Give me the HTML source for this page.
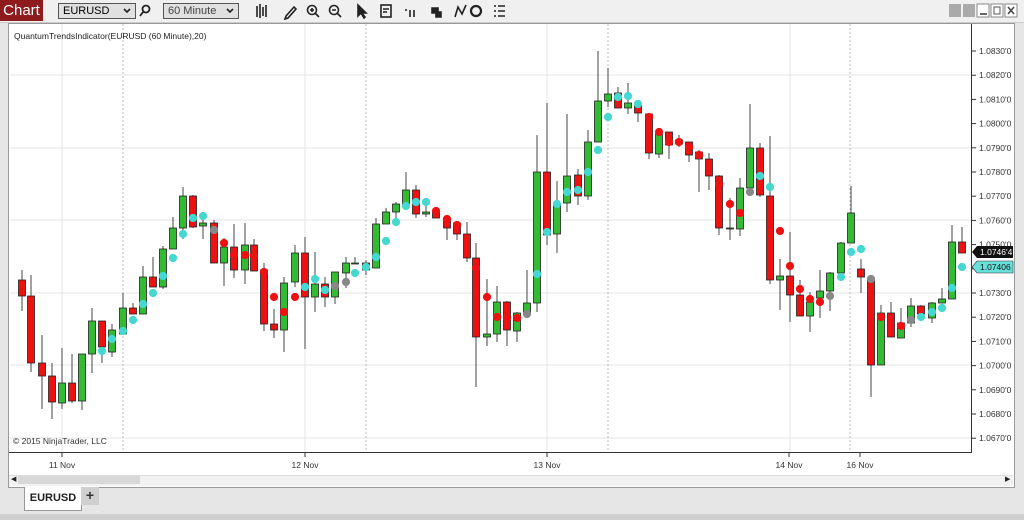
<!DOCTYPE html>
<html><head><meta charset="utf-8"><style>
body{margin:0;width:1024px;height:520px;overflow:hidden;background:#e6e6e6;font-family:"Liberation Sans",sans-serif;position:relative}
.abs{position:absolute}
.sel{position:absolute;top:3px;border:1px solid #555;background:#e0e0e0;font-size:11px;line-height:14px;padding-left:4px;box-sizing:border-box;height:16px}
.sel svg{position:absolute;right:4px;top:4px}
</style></head><body>
<div class="abs" style="left:0;top:0;width:1024px;height:22px;background:#f0f0f0;border-bottom:1px solid #ccc"></div>
<div class="abs" style="left:0;top:0;width:43px;height:21px;background:#8e1c1f;color:#fff;font-size:15px;line-height:21px;text-align:center">Chart</div>
<div class="sel" style="left:58px;width:78px">EURUSD<svg width="8" height="6"><path d="M1 1l3 3 3-3" stroke="#222" stroke-width="1.6" fill="none"/></svg></div>
<div class="sel" style="left:163px;width:76px;color:#444">60 Minute<svg width="8" height="6"><path d="M1 1l3 3 3-3" stroke="#222" stroke-width="1.6" fill="none"/></svg></div>
<svg class="abs" style="left:138px;top:3px" width="14" height="16" stroke="#222" fill="none" stroke-width="1.8"><circle cx="8" cy="6" r="3.5"/><path d="M5.5 8.5L2 13"/></svg>
<svg class="abs" style="left:250px;top:2px" width="270" height="18" stroke="#222" fill="none" stroke-width="1.6">
<path d="M7 4v11M10 2v14M13 5v9M16 3v12"/>
<path d="M36 14l8-9 2 2-8 9-3 1z"/>
<circle cx="62" cy="8" r="4.5"/><path d="M65 11l4 4M60 8h4M62 6v4"/>
<circle cx="84" cy="8" r="4.5"/><path d="M87 11l4 4M82 8h4"/>
<path d="M108 3v11l3-3 3 5 1-1-3-4h4z" fill="#222"/>
<rect x="131" y="3" width="10" height="12"/><path d="M133 7h6M133 10h4"/>
<path d="M182 6h6v5h-6zM186 10h5v5h-5z" fill="#222"/>
<path d="M205 15l3-10 4 7 4-9" /><circle cx="226" cy="9" r="5" stroke-width="2.2"/>
<path d="M244 4h2M248 4h7M244 9h2M248 9h7M244 14h2M248 14h7"/>
<path d="M156 7v2M160 8v7M164 8v7"/>
</svg>
<svg class="abs" style="left:948px;top:3px" width="70" height="16">
<rect x="1" y="1" width="12" height="13" fill="#aaa"/><rect x="15" y="1" width="12" height="13" fill="#aaa"/>
<rect x="29" y="1" width="12" height="13" fill="#fff" stroke="#888"/><path d="M32 11h7" stroke="#333" stroke-width="1.5"/>
<rect x="43" y="1" width="12" height="13" fill="#fff" stroke="#888"/><rect x="46" y="4" width="6" height="7" fill="none" stroke="#555"/>
<rect x="57" y="1" width="12" height="13" fill="#fff" stroke="#888"/><path d="M60 4l6 7M66 4l-6 7" stroke="#444" stroke-width="1.5"/>
</svg>
<div class="abs" style="left:8px;top:23px;width:1005px;height:463px;background:#fff;border:1px solid #999"></div>
<svg id="c" class="abs" style="left:0;top:0" width="1024" height="520"></svg>
<div class="abs" style="left:14px;top:31px;font-size:8.5px;color:#222">QuantumTrendsIndicator(EURUSD (60 Minute),20)</div>
<div class="abs" style="left:13px;top:436px;font-size:8.5px;color:#333">© 2015 NinjaTrader, LLC</div>
<div class="abs" style="left:9px;top:475px;width:1004px;height:10px;background:#f2f2f2;border-top:1px solid #ddd"></div>
<div class="abs" style="left:18px;top:476px;width:122px;height:8px;background:#d8d8d8"></div>
<div class="abs" style="left:11px;top:475px;font-size:7px;color:#222">&#9664;</div>
<div class="abs" style="left:1005px;top:475px;font-size:7px;color:#222">&#9654;</div>
<div class="abs" style="left:24px;top:487px;width:56px;height:23px;background:#fff;border:1px solid #999;border-top:none;font-size:11px;line-height:22px;text-align:center;color:#222;font-weight:bold">EURUSD</div>
<div class="abs" style="left:81px;top:487px;width:18px;height:18px;background:#d0d0d0;font-size:14px;line-height:17px;text-align:center;font-weight:bold;color:#333">+</div>
<div class="abs" style="left:0;top:514px;width:1024px;height:6px;background:#cfcfcf"></div>
<script>
var s='';
[75,148,220,293,365,438].forEach(function(y){s+='<line x1="10" x2="971" y1="'+y+'" y2="'+y+'" stroke="#e4e4e4"/>';});
[62,305,547,790].forEach(function(x){s+='<line x1="'+x+'" x2="'+x+'" y1="24" y2="452" stroke="#e4e4e4"/>';});
[123,366,608,850].forEach(function(x){s+='<line x1="'+x+'" x2="'+x+'" y1="24" y2="452" stroke="#bbb" stroke-dasharray="2,2"/>';});
s+='<line x1="971.5" x2="971.5" y1="24" y2="452" stroke="#333"/>';
s+='<line x1="9" x2="972" y1="452.5" y2="452.5" stroke="#333"/>';
for(var i=0;i<=16;i++){var y=51+i*24.2;var p=(1.0830-i*0.001).toFixed(4);
s+='<line x1="972" x2="976" y1="'+y+'" y2="'+y+'" stroke="#333"/><text x="979" y="'+(y+3)+'" font-size="8.5" fill="#333" font-family="Liberation Sans">'+p+"'0</text>";}
[[62,'11 Nov'],[305,'12 Nov'],[547,'13 Nov'],[789,'14 Nov'],[860,'16 Nov']].forEach(function(t){
s+='<line x1="'+t[0]+'" x2="'+t[0]+'" y1="453" y2="457" stroke="#333"/><text x="'+t[0]+'" y="468" font-size="8.5" text-anchor="middle" fill="#333" font-family="Liberation Sans">'+t[1]+'</text>';});
var C=[[22,270,280,296,311,'r'],[31,275,296,363,372,'r'],[42,335,363,376,409,'r'],[52,363,376,402,419,'r'],[62,348,383,403,409,'g'],[72,354,383,401,403,'r'],[82,354,354,401,410,'g'],[92,308,321,354,373,'g'],[102,321,321,347,363,'r',351,'c'],[112,324,330,352,357,'g',339,'c'],[123,293,308,334,334,'g',331,'c'],[133,303,308,314,314,'r',320,'c'],[143,266,277,314,314,'g',304,'c'],[153,257,277,287,287,'r',293,'c'],[163,246,249,287,289,'g',276,'c'],[173,217,228,249,249,'g',258,'c'],[183,187,196,228,239,'g',234,'c'],[193,195,196,227,228,'r',218,'c'],[203,212,223,226,239,'g',216,'c'],[214,220,223,263,263,'r',230,'y'],[224,238,247,263,286,'g',243,'r'],[234,224,247,270,278,'r',255,'r'],[245,223,245,270,284,'g',255,'r'],[254,239,245,271,271,'r',256,'r'],[264,263,270,324,331,'r',272,'r'],[274,309,324,330,338,'r',297,'r'],[284,277,283,330,352,'g',312,'r'],[295,245,253,282,287,'g',297,'r'],[305,237,253,297,349,'r',287,'c'],[315,252,284,297,312,'g',279,'c'],[325,277,284,297,307,'r',290,'c'],[335,272,272,297,304,'g',286,'y'],[346,257,263,273,288,'g',282,'y'],[355,257,263,264,264,'g',273,'c'],[366,260,263,270,275,'r',267,'c'],[376,218,224,268,268,'g',257,'c'],[386,208,212,224,224,'g',241,'c'],[396,202,204,212,225,'g',222,'c'],[406,172,190,204,204,'g',206,'c'],[416,185,190,214,218,'r',202,'c'],[426,202,212,214,217,'g',202,'c'],[436,208,211,218,218,'r',211,'r'],[447,215,218,228,240,'r',219,'r'],[457,221,223,234,240,'r',225,'r'],[467,222,234,258,262,'r'],[476,243,258,337,387,'r',268,'r'],[487,279,334,337,346,'g',297,'r'],[497,286,302,334,342,'g',317,'r'],[507,301,302,330,346,'r',318,'r'],[517,312,313,331,342,'g',318,'r'],[527,270,303,313,313,'g',314,'y'],[537,135,172,303,312,'g',274,'c'],[547,103,172,235,245,'r',232,'c'],[557,181,204,234,253,'g',204,'c'],[567,114,176,203,212,'g',192,'c'],[578,169,175,196,205,'r',190,'c'],[588,130,142,196,200,'g',172,'c'],[598,51,101,142,142,'g',150,'c'],[608,68,94,101,107,'g',117,'c'],[618,87,93,108,108,'r',97,'c'],[628,83,103,108,114,'g',96,'c'],[638,102,105,113,122,'r',104,'c'],[649,114,114,153,159,'r',117,'r'],[659,132,134,154,158,'g',132,'r'],[669,132,132,145,159,'r',142,'r'],[679,135,140,144,147,'r',142,'r'],[689,142,142,155,162,'r',147,'r'],[699,150,152,159,192,'r',155,'r'],[709,153,159,176,190,'r'],[719,175,176,228,235,'r',184,'r'],[730,198,228,229,240,'k',204,'r'],[740,178,188,229,236,'g',213,'r'],[750,104,148,188,188,'g',192,'y'],[760,143,148,195,197,'r',176,'c'],[770,136,196,280,284,'r',187,'c'],[780,259,276,280,310,'g',231,'r'],[790,232,276,295,322,'r',266,'r'],[800,280,295,316,316,'r',289,'r'],[810,292,302,316,332,'g',299,'r'],[820,270,291,298,318,'g',302,'r'],[830,272,273,291,311,'g',296,'y'],[841,242,243,273,273,'g',277,'c'],[851,186,213,243,243,'g',252,'c'],[861,259,269,277,293,'r',249,'c'],[871,278,278,365,397,'r',279,'y'],[881,305,313,365,365,'g',317,'r'],[891,302,313,337,337,'r'],[901,308,323,338,338,'g',326,'r'],[911,298,306,323,327,'g',320,'y'],[921,305,306,314,314,'r',317,'c'],[932,302,303,318,323,'g',312,'c'],[942,288,299,303,303,'g',308,'c'],[952,225,242,299,299,'g',288,'c'],[962,227,242,253,253,'r',267,'c']];
var col={r:'#ee1111',g:'#33bb33',k:'#33bb33'},dc={r:'#ee1111',c:'#44d8d0',y:'#888'};
C.forEach(function(c){var x=c[0];
s+='<line x1="'+x+'" x2="'+x+'" y1="'+c[1]+'" y2="'+c[4]+'" stroke="#444"/>';
var h=Math.max(1,c[3]-c[2]);
s+='<rect x="'+(x-3.5)+'" y="'+c[2]+'" width="7" height="'+h+'" fill="'+col[c[5]]+'" stroke="#222" stroke-width="0.8"/>';
if(c[6])s+='<circle cx="'+x+'" cy="'+c[6]+'" r="4.1" fill="'+dc[c[7]]+'"/>';});
s+='<path d="M972 252l5-6h36v12h-36z" fill="#111"/><text x="980" y="255" font-size="8.5" fill="#fff" font-family="Liberation Sans">1.0746\'4</text>';
s+='<path d="M972 267l5-6h36v12h-36z" fill="#66e0d8" stroke="#333" stroke-width="0.6"/><text x="980" y="270" font-size="8.5" fill="#111" font-family="Liberation Sans">1.07406</text>';
document.getElementById('c').innerHTML=s;
</script>
</body></html>
